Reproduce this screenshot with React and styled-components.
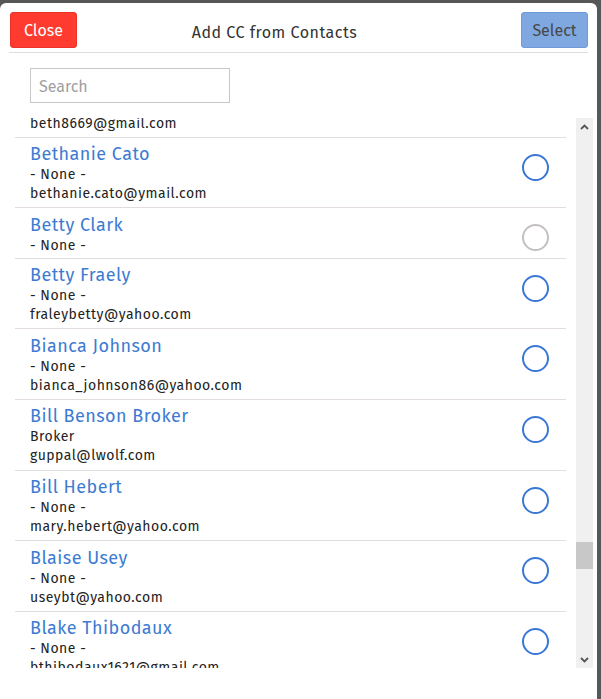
import styled, { createGlobalStyle } from 'styled-components'

const contacts = [
    {name: "Beth Landry", role: "- None -", email: "beth8669@gmail.com"},
    {name: "Bethanie Cato", role: "- None -", email: "bethanie.cato@ymail.com"},
    {name: "Betty Clark", role: "- None -", email: "", disabled: true},
    {name: "Betty Fraely", role: "- None -", email: "fraleybetty@yahoo.com"},
    {name: "Bianca Johnson", role: "- None -", email: "bianca_johnson86@yahoo.com"},
    {name: "Bill Benson Broker", role: "Broker", email: "guppal@lwolf.com"},
    {name: "Bill Hebert", role: "- None -", email: "mary.hebert@yahoo.com"},
    {name: "Blaise Usey", role: "- None -", email: "useybt@yahoo.com"},
    {name: "Blake Thibodaux", role: "- None -", email: "bthibodaux1621@gmail.com"},
    {name: "Bobbie Guidry", role: "- None -", email: "bguidry@gmail.com"},
]

const GlobalStyle = createGlobalStyle`
    html, body {
        margin: 0;
        padding: 0;
        height: 100%;
        overflow: hidden;
        background: #575757;
    }
    body {
        font-family: "Fira Sans", "Open Sans", "Noto Sans", sans-serif;
    }
    * {
        box-sizing: border-box;
    }
`

const StyledModal = styled.div`
    display: flex;
    flex-direction: column;
    margin: 3px 4px 0 0;
    height: 720px;
    background: #fff;
    border-radius: 6px;
`

const StyledHeader = styled.div`
    display: flex;
    align-items: center;
    margin: 0 9px;
    padding: 9px 0 4px 1px;
    border-bottom: 1px solid #dedede;
`

const StyledButton = styled.button`
    width: 67px;
    height: 36px;
    border-radius: 3px;
    border: 1px solid ${props => props.$border};
    background: ${props => props.$bg};
    color: ${props => props.$color};
    font-family: inherit;
    font-size: 16px;
    padding: 0;
`

const StyledTitle = styled.h4`
    flex: 1;
    margin: 4px 0 0 0;
    padding-right: 49px;
    text-align: center;
    font-size: 16px;
    font-weight: 400;
    letter-spacing: 0.5px;
    color: #333;
`

const StyledSearch = styled.input`
    display: block;
    width: 200px;
    height: 35px;
    margin: 15px 0 15px 30px;
    padding: 2px 8px 0;
    border: 1px solid #c8c8c8;
    font-family: inherit;
    font-size: 16px;
    color: #333;
    outline: none;

    &::placeholder {
        color: #a0a0a0;
    }
`

const StyledBody = styled.div`
    display: flex;
    gap: 10px;
    height: 550px;
    padding: 0 4px 0 15px;
`

const StyledViewport = styled.div`
    flex: 1;
    overflow: hidden;
`

const StyledList = styled.div`
    margin-top: -51px;
`

const StyledRow = styled.div`
    display: flex;
    align-items: flex-start;
    justify-content: space-between;
    padding: 6.5px 17px 3.1px 15px;
    border-top: ${props => props.$first ? 'none' : '1px solid #e2dcdc'};
`

const StyledInfo = styled.div`
    display: flex;
    flex-direction: column;
`

const StyledName = styled.div`
    font-size: 18px;
    line-height: 21px;
    letter-spacing: 0.45px;
    color: #3d7bd2;
`

const StyledLine = styled.div`
    font-size: 14px;
    line-height: ${props => props.$lh}px;
    color: #222;
    letter-spacing: 0.5px;
`

const StyledRadio = styled.div`
    width: 27px;
    height: 27px;
    margin-top: 9.5px;
    border-radius: 50%;
    border: 2px solid ${props => props.$disabled ? '#c4c0c0' : '#3a78d4'};
`

const StyledTrack = styled.div`
    display: flex;
    flex-direction: column;
    width: 17px;
    background: #f0f0f0;
`

const StyledArrow = styled.div`
    display: flex;
    align-items: center;
    justify-content: center;
    height: 17px;
`

const StyledTrackSpace = styled.div`
    flex: ${props => props.$grow};
`

const StyledThumb = styled.div`
    height: 27px;
    background: #c8c8c8;
`

function Chevron({ up }) {
    return (
        <svg width="9" height="6" viewBox="0 0 9 6">
            <path d={up ? "M1 5 L4.5 1.5 L8 5" : "M1 1 L4.5 4.5 L8 1"} fill="none" stroke="#555" strokeWidth="1.8"/>
        </svg>
    )
}

export default function App() {
    return (
        <>
            <GlobalStyle/>
            <StyledModal>
                <StyledHeader>
                    <StyledButton $bg="#ff3b30" $border="#e8332a" $color="#fff">Close</StyledButton>
                    <StyledTitle>Add CC from Contacts</StyledTitle>
                    <StyledButton $bg="#7fa7e0" $border="#6e9ad9" $color="#474747">Select</StyledButton>
                </StyledHeader>
                <StyledSearch placeholder="Search"/>
                <StyledBody>
                    <StyledViewport>
                        <StyledList>
                            {contacts.map((c, i) =>
                                <StyledRow key={i} $first={i == 0}>
                                    <StyledInfo>
                                        <StyledName>{c.name}</StyledName>
                                        <StyledLine $lh={19}>{c.role}</StyledLine>
                                        {c.email ? <StyledLine $lh={20}>{c.email}</StyledLine> : null}
                                    </StyledInfo>
                                    <StyledRadio $disabled={c.disabled}/>
                                </StyledRow>
                            )}
                        </StyledList>
                    </StyledViewport>
                    <StyledTrack>
                        <StyledArrow><Chevron up/></StyledArrow>
                        <StyledTrackSpace $grow={407}/>
                        <StyledThumb/>
                        <StyledTrackSpace $grow={82}/>
                        <StyledArrow><Chevron/></StyledArrow>
                    </StyledTrack>
                </StyledBody>
            </StyledModal>
        </>
    )
}
